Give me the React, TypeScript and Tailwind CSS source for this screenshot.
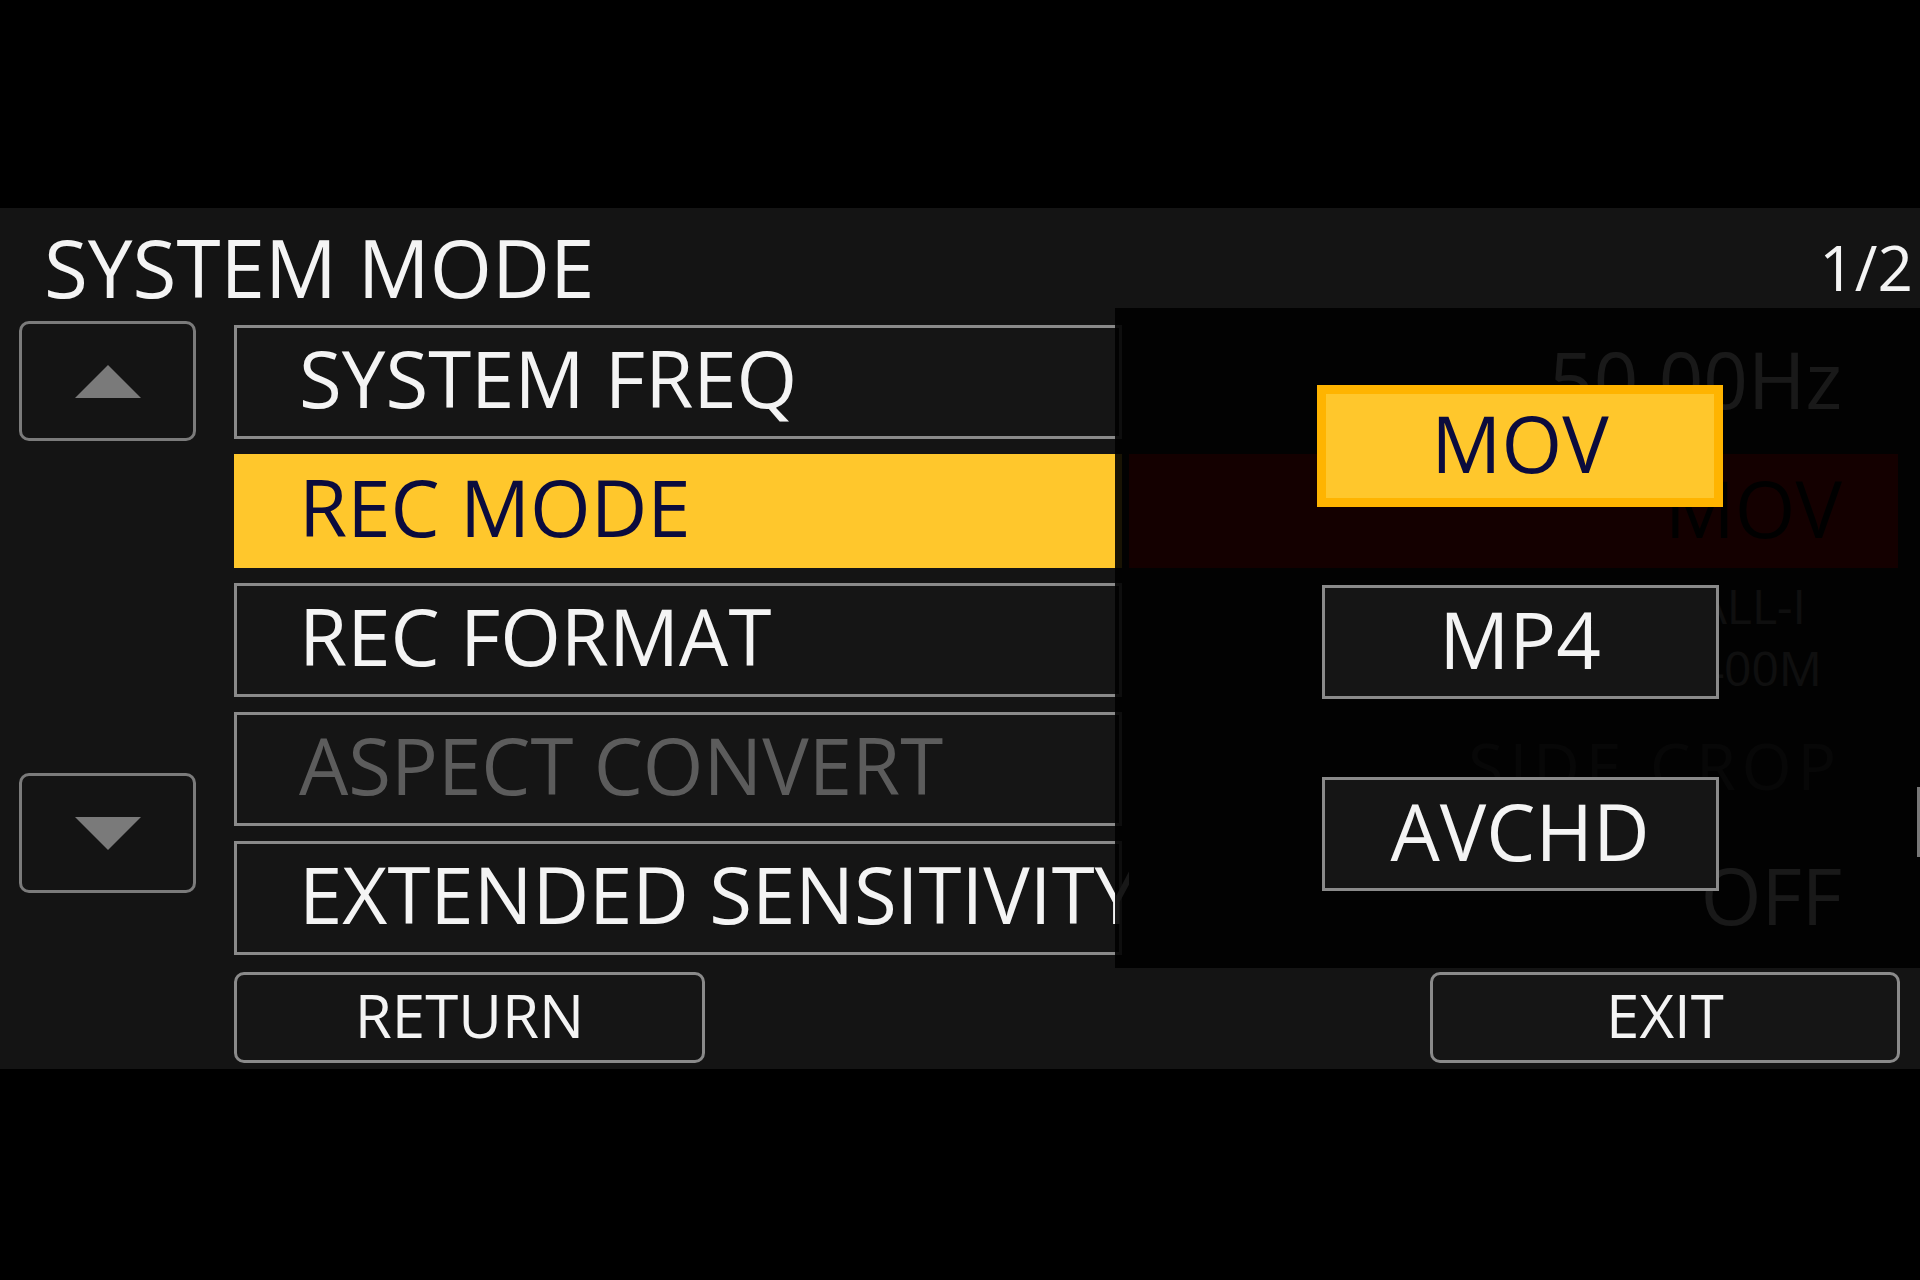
import React from "react";

type Row = {
  label: string;
  value: string | string[];
  active?: boolean;
  disabled?: boolean;
};

const rows: Row[] = [
  { label: "SYSTEM FREQ", value: "50.00Hz" },
  { label: "REC MODE", value: "MOV", active: true },
  { label: "REC FORMAT", value: ["ALL-I", "400M"] },
  { label: "ASPECT CONVERT", value: "SIDE CROP", disabled: true },
  { label: "EXTENDED SENSITIVITY", value: "OFF" },
];

const options = ["MOV", "MP4", "AVCHD"];

const Arrow: React.FC<{ down?: boolean }> = ({ down }) => (
  <div className="flex h-[120px] items-center justify-center rounded-[10px] border-[3px] border-[#7b7b7b] bg-[#141414]">
    <svg width="66" height="33" viewBox="0 0 66 33">
      {down ? (
        <polygon points="0,0 66,0 33,33" fill="#7a7a7a" />
      ) : (
        <polygon points="33,0 66,33 0,33" fill="#7a7a7a" />
      )}
    </svg>
  </div>
);

const MenuRow: React.FC<{ row: Row }> = ({ row }) => {
  const labelClass = row.active
    ? "border-[#ffc72c] bg-[#ffc72c] text-[#0b0b3d]"
    : row.disabled
      ? "border-[#8a8a8a] bg-[#151515] text-[#5c5c5c]"
      : "border-[#8a8a8a] bg-[#151515] text-[#f4f4f4]";

  return (
    <div className="flex h-[114px] gap-[7px]">
      <div
        className={`flex w-[888px] shrink-0 items-center whitespace-nowrap border-[3px] pb-[8px] pl-[62px] text-[78px] leading-none ${labelClass}`}
      >
        {row.label}
      </div>
      <div
        className={
          row.active
            ? "flex flex-1 items-center justify-end bg-[#c80000] pb-[6px] pr-[56px] text-[78px] leading-none text-black"
            : "flex flex-1 items-center justify-end bg-[#1a1a1a] pb-[6px] pr-[56px] text-[78px] leading-none text-white"
        }
      >
        {Array.isArray(row.value) ? (
          <div className="flex flex-col gap-[14px] pr-[20px] text-[48px] leading-none text-[#9a9a9a]">
            {row.value.map((v) => (
              <span key={v}>{v}</span>
            ))}
          </div>
        ) : (
          <span className={row.disabled ? "text-[64px] tracking-[6px] text-[#4a4a4a]" : ""}>
            {row.value}
          </span>
        )}
      </div>
    </div>
  );
};

const App: React.FC = () => {
  return (
    <div className="flex h-[1280px] w-[1920px] flex-col overflow-hidden bg-black font-['Open_Sans',sans-serif]">
      <div className="h-[208px] shrink-0" />

      <div className="relative flex h-[861px] shrink-0 flex-col bg-[#141414]">
        <div className="flex h-[113px] items-start justify-between">
          <h1 className="ml-[44px] mt-[19px] text-[80px] font-normal leading-none text-[#f4f4f4]">
            SYSTEM MODE
          </h1>
          <span className="mr-[7px] mt-[28px] text-[62px] leading-none text-[#f4f4f4]">
            1/2
          </span>
        </div>

        <div className="flex pl-[19px]">
          <div className="flex w-[177px] flex-col gap-[332px]">
            <Arrow />
            <Arrow down />
          </div>
          <div className="ml-[38px] mt-[4px] flex w-[1664px] flex-col gap-[15px]">
            {rows.map((row) => (
              <MenuRow key={row.label} row={row} />
            ))}
          </div>
        </div>

        <div className="mt-[17px] flex justify-between pl-[234px] pr-[20px]">
          <button className="flex h-[91px] w-[471px] items-center justify-center rounded-[10px] border-[3px] border-[#8a8a8a] bg-[#151515] pb-[6px] text-[60px] leading-none text-[#f4f4f4]">
            RETURN
          </button>
          <button className="flex h-[91px] w-[470px] items-center justify-center rounded-[10px] border-[3px] border-[#8a8a8a] bg-[#151515] pb-[6px] text-[60px] leading-none text-[#f4f4f4]">
            EXIT
          </button>
        </div>

        {/* selection popup */}
        <div className="absolute left-[1115px] top-[100px] flex h-[660px] w-[805px] flex-col items-center justify-center gap-[78px] bg-black/90 pl-[5px]">
          {options.map((opt, i) =>
            i === 0 ? (
              <div
                key={opt}
                className="flex h-[122px] w-[406px] items-center justify-center border-[9px] border-[#ffb400] bg-[#ffc72c] pb-[6px] text-[78px] leading-none text-[#0b0b3d]"
              >
                {opt}
              </div>
            ) : (
              <div
                key={opt}
                className="flex h-[114px] w-[397px] items-center justify-center border-[3px] border-[#8a8a8a] bg-[#151515] pb-[6px] text-[78px] leading-none text-[#f4f4f4]"
              >
                {opt}
              </div>
            ),
          )}
          <div className="absolute right-0 top-[479px] h-[70px] w-[3px] bg-[#777777]" />
        </div>
      </div>

      <div className="flex-1" />
    </div>
  );
};

export default App;
